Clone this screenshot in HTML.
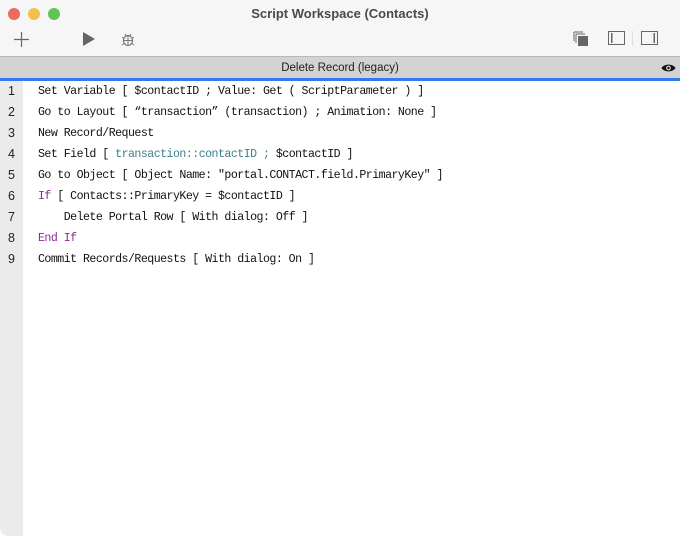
<!DOCTYPE html>
<html><head><style>
*{margin:0;padding:0;box-sizing:border-box}
body{width:680px;height:536px;background:#fff;overflow:hidden;font-family:"Liberation Sans",sans-serif;position:relative}
.tb{position:absolute;left:0;top:0;width:680px;height:57px;background:#f6f6f6;border-bottom:1px solid #b9b9b9}
.dot{position:absolute;top:8px;width:12px;height:12px;border-radius:50%}
.title{position:absolute;top:6px;left:0;width:680px;text-align:center;font-size:13px;font-weight:bold;color:#4a4a4a}
.hdr{position:absolute;left:0;top:57px;width:680px;height:22px;background:#d3d3d3;font-size:11.5px;color:#222;text-align:center;line-height:22px}
.blue{position:absolute;left:0;top:78px;width:680px;height:3px;background:#2f7bef}
.gut{position:absolute;left:0;top:81px;width:23px;height:455px;background:#ebebeb;border-bottom-left-radius:8px}
.w{position:absolute;left:0;top:2px;width:680px}
.ln{position:absolute;left:0;width:23px;text-align:center;font-size:12.5px;color:#222}
.code{position:absolute;left:38px;font-family:"Liberation Mono",monospace;font-size:11.6px;letter-spacing:-0.53px;color:#111;white-space:pre}
.t{color:#3d7f8c}.p{color:#8b2c8f}
</style></head><body>
<div class="tb">
<div class="dot" style="left:8px;background:#ed6a5e"></div>
<div class="dot" style="left:28px;background:#f5bf4f"></div>
<div class="dot" style="left:48px;background:#61c554"></div>
<div class="title">Script Workspace (Contacts)</div>
<svg style="position:absolute;left:13px;top:31px" width="17" height="17"><path d="M8.5 1v15M1 8.5h15" stroke="#666" stroke-width="1.2"/></svg>
<svg style="position:absolute;left:82px;top:32px" width="14" height="14"><path d="M1 0L13 7L1 14Z" fill="#666"/></svg>
<svg style="position:absolute;left:121px;top:31px" width="14" height="16"><ellipse cx="7" cy="9.5" rx="4.5" ry="5" fill="none" stroke="#777" stroke-width="1.2"/><path d="M7 5v10M2.5 9.5h9M4 3l1.5 2M10 3l-1.5 2M1 6l2 1.5M13 6l-2 1.5M1 14l2-1.5M13 14l-2-1.5" stroke="#777" stroke-width="1"/></svg>
<svg style="position:absolute;left:573px;top:31px" width="16" height="16"><path d="M1 1h9M1 1v9M3 3h9M3 3v9" stroke="#666" stroke-width="1" fill="none"/><rect x="5" y="5" width="10" height="10" fill="#666"/></svg>
<svg style="position:absolute;left:608px;top:31px" width="18" height="15"><rect x="0.5" y="0.5" width="16" height="13" fill="none" stroke="#666"/><rect x="3" y="2" width="1.5" height="10" fill="#666"/></svg>
<div style="position:absolute;left:632px;top:31px;width:1px;height:15px;background:#e0e0e0"></div>
<svg style="position:absolute;left:641px;top:31px" width="18" height="15"><rect x="0.5" y="0.5" width="16" height="13" fill="none" stroke="#666"/><rect x="12.5" y="2" width="1.5" height="10" fill="#666"/></svg>
</div>
<div class="hdr">Delete Record (legacy)</div>
<svg style="position:absolute;left:661px;top:63px" width="15" height="10"><path d="M0.5 5C3 0.5 12 0.5 14.5 5C12 9.5 3 9.5 0.5 5Z" fill="#111"/><circle cx="7.5" cy="5" r="2.4" fill="#d3d3d3"/><circle cx="7.5" cy="5" r="1.2" fill="#111"/></svg>
<div class="blue"></div>
<div class="gut"></div>
<div class="w">
<div class="ln" style="top:82px">1</div><div class="code" style="top:83px">Set Variable [ $contactID ; Value: Get ( ScriptParameter ) ]</div>
<div class="ln" style="top:103px">2</div><div class="code" style="top:104px">Go to Layout [ “transaction” (transaction) ; Animation: None ]</div>
<div class="ln" style="top:124px">3</div><div class="code" style="top:125px">New Record/Request</div>
<div class="ln" style="top:145px">4</div><div class="code" style="top:146px">Set Field [ <span class="t">transaction::contactID ;</span> $contactID ]</div>
<div class="ln" style="top:166px">5</div><div class="code" style="top:167px">Go to Object [ Object Name: "portal.CONTACT.field.PrimaryKey" ]</div>
<div class="ln" style="top:187px">6</div><div class="code" style="top:188px"><span class="p">If</span> [ Contacts::PrimaryKey = $contactID ]</div>
<div class="ln" style="top:208px">7</div><div class="code" style="top:209px">    Delete Portal Row [ With dialog: Off ]</div>
<div class="ln" style="top:229px">8</div><div class="code" style="top:230px"><span class="p">End If</span></div>
<div class="ln" style="top:250px">9</div><div class="code" style="top:251px">Commit Records/Requests [ With dialog: On ]</div>
</div>
</body></html>
